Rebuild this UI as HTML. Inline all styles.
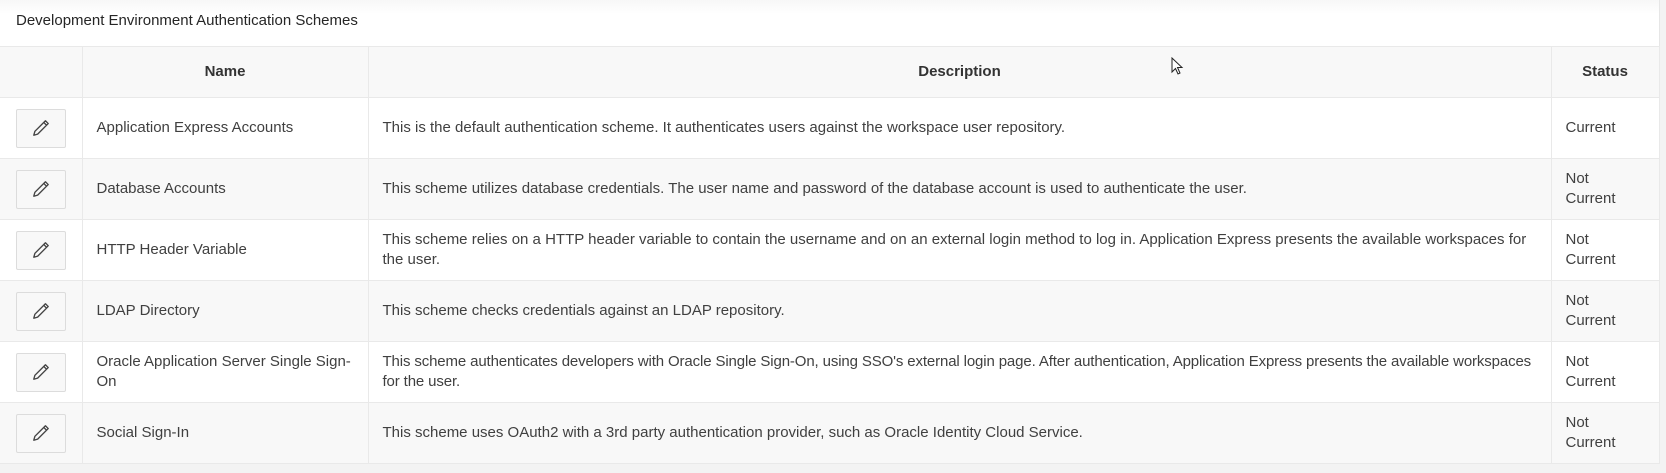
<!DOCTYPE html>
<html><head><meta charset="utf-8"><style>
html,body{margin:0;padding:0;width:1666px;height:473px;overflow:hidden;background:#f3f3f3;font-family:"Liberation Sans",sans-serif;color:#404040}
.wrap{position:absolute;left:0;top:0;width:1659px;height:464px;background:#fff;border-right:1px solid #e6e6e6}
.title{height:46px;box-sizing:border-box;padding:12px 16px 0;font-size:15px;color:#262626;background:linear-gradient(#f7f7f7 0,#fff 14px)}
table{position:absolute;top:46px;left:0;width:1659px;border-collapse:collapse;table-layout:fixed;font-size:15px}
td,th{border:1px solid #e9e9e9;vertical-align:middle;padding:0 14px;line-height:20px;white-space:nowrap}
th{height:50px;background:#f8f8f8;font-weight:bold;font-size:15px;color:#333;text-align:center}
td{height:60px}
tr:nth-child(odd) td{background:#f8f8f8}
tr td:first-child,tr th:first-child{border-left:none;padding:0}
.btn{margin-left:16px;width:50px;height:39px;border:1px solid #dcdcdc;border-radius:2px;background:#f8f8f8;box-sizing:border-box;display:flex;align-items:center;justify-content:center}
.stat{white-space:normal;padding-left:14px}
.tight{letter-spacing:-0.13px}
</style></head><body>
<div class="wrap">
<div class="title">Development Environment Authentication Schemes</div>
<table>
<colgroup><col style="width:82px"><col style="width:286px"><col style="width:1183px"><col style="width:108px"></colgroup>
<tr><th></th><th>Name</th><th>Description</th><th>Status</th></tr>
<tr><td><div class="btn"><svg width="20" height="20" viewBox="0 0 18 18"><path d="M2.5 15.5 L3.5 12 L13 2.5 L15.5 5 L6 14.5 Z M11.5 4 L14 6.5" fill="none" stroke="#444" stroke-width="1.2" stroke-linejoin="round"/></svg></div></td><td>Application Express Accounts</td><td>This is the default authentication scheme. It authenticates users against the workspace user repository.</td><td class="stat">Current</td></tr>
<tr><td><div class="btn"><svg width="20" height="20" viewBox="0 0 18 18"><path d="M2.5 15.5 L3.5 12 L13 2.5 L15.5 5 L6 14.5 Z M11.5 4 L14 6.5" fill="none" stroke="#444" stroke-width="1.2" stroke-linejoin="round"/></svg></div></td><td>Database Accounts</td><td>This scheme utilizes database credentials. The user name and password of the database account is used to authenticate the user.</td><td class="stat">Not<br>Current</td></tr>
<tr><td><div class="btn"><svg width="20" height="20" viewBox="0 0 18 18"><path d="M2.5 15.5 L3.5 12 L13 2.5 L15.5 5 L6 14.5 Z M11.5 4 L14 6.5" fill="none" stroke="#444" stroke-width="1.2" stroke-linejoin="round"/></svg></div></td><td>HTTP Header Variable</td><td>This scheme relies on a HTTP header variable to contain the username and on an external login method to log in. Application Express presents the available workspaces for<br>the user.</td><td class="stat">Not<br>Current</td></tr>
<tr><td><div class="btn"><svg width="20" height="20" viewBox="0 0 18 18"><path d="M2.5 15.5 L3.5 12 L13 2.5 L15.5 5 L6 14.5 Z M11.5 4 L14 6.5" fill="none" stroke="#444" stroke-width="1.2" stroke-linejoin="round"/></svg></div></td><td>LDAP Directory</td><td>This scheme checks credentials against an LDAP repository.</td><td class="stat">Not<br>Current</td></tr>
<tr><td><div class="btn"><svg width="20" height="20" viewBox="0 0 18 18"><path d="M2.5 15.5 L3.5 12 L13 2.5 L15.5 5 L6 14.5 Z M11.5 4 L14 6.5" fill="none" stroke="#444" stroke-width="1.2" stroke-linejoin="round"/></svg></div></td><td>Oracle Application Server Single Sign-<br>On</td><td class="tight">This scheme authenticates developers with Oracle Single Sign-On, using SSO's external login page. After authentication, Application Express presents the available workspaces<br>for the user.</td><td class="stat">Not<br>Current</td></tr>
<tr><td><div class="btn"><svg width="20" height="20" viewBox="0 0 18 18"><path d="M2.5 15.5 L3.5 12 L13 2.5 L15.5 5 L6 14.5 Z M11.5 4 L14 6.5" fill="none" stroke="#444" stroke-width="1.2" stroke-linejoin="round"/></svg></div></td><td>Social Sign-In</td><td>This scheme uses OAuth2 with a 3rd party authentication provider, such as Oracle Identity Cloud Service.</td><td class="stat">Not<br>Current</td></tr>
</table>
<svg style="position:absolute;left:1171px;top:57px" width="14" height="20" viewBox="0 0 14 20"><path d="M1 1 L1 15 L4.5 11.5 L7 17 L9 16 L6.5 10.5 L11 10.5 Z" fill="#fff" stroke="#222" stroke-width="1"/></svg>
</div>
</body></html>
